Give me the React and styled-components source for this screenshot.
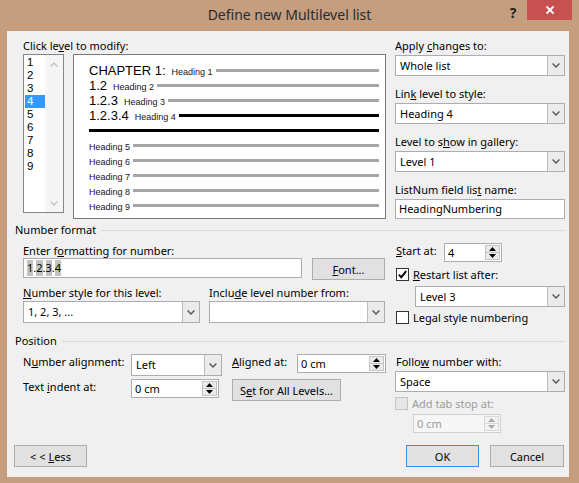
import React from "react";
import styled, { createGlobalStyle } from "styled-components";

const UI = `"Noto Sans", "Open Sans", "DejaVu Sans", sans-serif`;
const ARIAL = `"Liberation Sans", Arial, sans-serif`;

const levels = [1, 2, 3, 4, 5, 6, 7, 8, 9];

const previewRows = [
  { num: "CHAPTER 1:", tag: "Heading 1" },
  { num: "1.2", tag: "Heading 2" },
  { num: "1.2.3", tag: "Heading 3" },
  { num: "1.2.3.4", tag: "Heading 4", dark: true },
  { dark: true },
  { tag: "Heading 5" },
  { tag: "Heading 6" },
  { tag: "Heading 7" },
  { tag: "Heading 8" },
  { tag: "Heading 9" },
];

function Chevron({ color = "#555" }) {
  return (
    <svg width="8" height="5" viewBox="0 0 8 5">
      <path d="M0.6 0.6 L4 4 L7.4 0.6" fill="none" stroke={color} strokeWidth="1.4" />
    </svg>
  );
}

function ChevronUp({ color = "#c2c2c2" }) {
  return (
    <svg width="8" height="5" viewBox="0 0 8 5">
      <path d="M0.6 4.4 L4 1 L7.4 4.4" fill="none" stroke={color} strokeWidth="1.4" />
    </svg>
  );
}

function Triangle({ up, color }) {
  return (
    <svg width="7" height="4" viewBox="0 0 7 4">
      <path d={up ? "M0 4 L3.5 0 L7 4 Z" : "M0 0 L3.5 4 L7 0 Z"} fill={color} />
    </svg>
  );
}

function Combo({ width, height = 21, value, mt = 0 }) {
  return (
    <ComboBox $w={width} $h={height} $mt={mt}>
      <ComboValue $h={height}>{value}</ComboValue>
      <DropButton>
        <Chevron />
      </DropButton>
    </ComboBox>
  );
}

function Spin({ width, value, disabled }) {
  const arrow = disabled ? "#a8a8a8" : "#000";
  return (
    <SpinBox $w={width} $disabled={disabled}>
      <SpinValue $disabled={disabled}>{value}</SpinValue>
      <SpinButtons $disabled={disabled}>
        <SpinHalf>
          <Triangle up color={arrow} />
        </SpinHalf>
        <SpinHalf>
          <Triangle color={arrow} />
        </SpinHalf>
      </SpinButtons>
    </SpinBox>
  );
}

function CheckBox({ checked, disabled }) {
  return (
    <Box $disabled={disabled}>
      {checked && (
        <svg width="11" height="11" viewBox="0 0 11 11">
          <path d="M1.8 5.6 L4.3 8.2 L9.2 2.2" fill="none" stroke="#000" strokeWidth="1.9" />
        </svg>
      )}
    </Box>
  );
}

export default function App() {
  return (
    <>
      <GlobalStyle />
      <Window>
        <TitleBar>
          <Title>Define new Multilevel list</Title>
          <Controls>
            <Help>?</Help>
            <Close>
              <svg width="10" height="10" viewBox="0 0 10 10">
                <path d="M1.5 1.5 L8.5 8.5 M8.5 1.5 L1.5 8.5" stroke="#fff" strokeWidth="1.8" />
              </svg>
            </Close>
          </Controls>
        </TitleBar>

        <Client>
          <TopSection>
            <LeftCol>
              <Label>
                Click le<U>v</U>el to modify:
              </Label>
              <PreviewArea>
                <LevelList>
                  <LevelItems>
                    {levels.map((n) => (
                      <LevelItem key={n} $selected={n === 4}>
                        {n}
                      </LevelItem>
                    ))}
                  </LevelItems>
                  <ScrollTrack>
                    <ChevronUp />
                    <Chevron color="#c2c2c2" />
                  </ScrollTrack>
                </LevelList>
                <Preview>
                  {previewRows.map((row, i) => (
                    <PreviewRow key={i}>
                      {row.num && <Num>{row.num}</Num>}
                      {row.tag && <Tag>{row.tag}</Tag>}
                      <Rule $dark={row.dark} />
                    </PreviewRow>
                  ))}
                </Preview>
              </PreviewArea>
            </LeftCol>

            <RightCol>
              <Field>
                <Label>
                  Apply <U>c</U>hanges to:
                </Label>
                <Combo width={170} value="Whole list" mt={1} />
              </Field>
              <Field>
                <Label>
                  Lin<U>k</U> level to style:
                </Label>
                <Combo width={170} value="Heading 4" mt={1} />
              </Field>
              <Field>
                <Label>
                  Level to s<U>h</U>ow in gallery:
                </Label>
                <Combo width={170} value="Level 1" mt={1} />
              </Field>
              <Field>
                <Label>
                  ListNum field lis<U>t</U> name:
                </Label>
                <TextBox $w={170} $mt={1}>
                  HeadingNumbering
                </TextBox>
              </Field>
            </RightCol>
          </TopSection>

          <SectionHeader $mt={3}>
            <HeaderText>Number format</HeaderText>
            <HeaderLine />
          </SectionHeader>

          <Section $mt={5}>
            <Block $w={363}>
              <Label $h={15}>
                Enter f<U>o</U>rmatting for number:
              </Label>
              <Row>
                <TextBox $w={279}>
                  <Mark>1</Mark>.<Mark>2</Mark>.<Mark>3</Mark>.<Mark>4</Mark>
                </TextBox>
                <Button $w={73} $ml={10}>
                  <U>F</U>ont...
                </Button>
              </Row>
              <Row $mt={5}>
                <Label $w={186} $h={15}>
                  <U>N</U>umber style for this level:
                </Label>
                <Label $h={15}>
                  Inclu<U>d</U>e level number from:
                </Label>
              </Row>
              <Row $mt={1}>
                <Combo width={177} height={22} value="1, 2, 3, ..." />
                <Gap $w={9} />
                <Combo width={176} height={22} value="" />
              </Row>
            </Block>

            <Block $w={169} $ml={10}>
              <Row>
                <Label $w={48} $h={15}>
                  <U>S</U>tart at:
                </Label>
                <Spin width={58} value="4" />
              </Row>
              <CheckRow $mt={6}>
                <CheckBox checked />
                <CheckLabel>
                  <U>R</U>estart list after:
                </CheckLabel>
              </CheckRow>
              <Row $mt={5} $ml={19}>
                <Combo width={150} value="Level 3" />
              </Row>
              <CheckRow $mt={4}>
                <CheckBox />
                <CheckLabel>
                  Le<U>g</U>al style numbering
                </CheckLabel>
              </CheckRow>
            </Block>
          </Section>

          <SectionHeader $mt={9}>
            <HeaderText>Position</HeaderText>
            <HeaderLine />
          </SectionHeader>

          <Section $mt={5}>
            <Block $w={363}>
              <Row>
                <Label $w={108}>
                  N<U>u</U>mber alignment:
                </Label>
                <Combo width={91} height={22} value="Left" />
                <Label $w={65} $ml={10}>
                  <U>A</U>ligned at:
                </Label>
                <Spin width={89} value="0 cm" />
              </Row>
              <Row $mt={3}>
                <Label $w={108}>
                  Text <U>i</U>ndent at:
                </Label>
                <Spin width={88} value="0 cm" />
                <Button $w={109} $ml={13}>
                  S<U>e</U>t for All Levels...
                </Button>
              </Row>
            </Block>

            <Block $w={170} $ml={9}>
              <Label $pl={1}>
                Follo<U>w</U> number with:
              </Label>
              <Combo width={170} value="Space" mt={1} />
              <CheckRow $mt={5}>
                <CheckBox disabled />
                <CheckLabel $disabled>Add tab stop at:</CheckLabel>
              </CheckRow>
              <Row $mt={4} $ml={18}>
                <Spin width={88} value="0 cm" disabled />
              </Row>
            </Block>
          </Section>

          <Footer>
            <Button $w={73} $ml={-1}>
              {"< < "}
              <U>L</U>ess
            </Button>
            <Gap $grow />
            <Button $w={73} $default>
              OK
            </Button>
            <Button $w={74} $ml={11}>
              Cancel
            </Button>
          </Footer>
        </Client>
      </Window>
    </>
  );
}

const GlobalStyle = createGlobalStyle`
  html, body {
    margin: 0;
    padding: 0;
    background: #c59e80;
  }
  * {
    box-sizing: border-box;
  }
`;

const Window = styled.div`
  width: 579px;
  height: 483px;
  background: #c59e80;
  display: flex;
  flex-direction: column;
  font-family: ${UI};
  font-size: 11px;
  color: #000;
  overflow: hidden;
`;

const TitleBar = styled.div`
  height: 31px;
  flex-shrink: 0;
  display: grid;
  grid-template-columns: 1fr auto 1fr;
  align-items: start;
`;

const Title = styled.div`
  grid-column: 2;
  font-size: 14px;
  line-height: 30px;
  color: #2b2b2b;
  white-space: nowrap;
`;

const Controls = styled.div`
  grid-column: 3;
  justify-self: end;
  display: flex;
  margin-right: 7px;
`;

const Help = styled.div`
  width: 28px;
  height: 24px;
  display: flex;
  align-items: center;
  justify-content: center;
  font-size: 14px;
  font-weight: 700;
  color: #222;
`;

const Close = styled.div`
  width: 45px;
  height: 20px;
  background: #c75050;
  display: flex;
  align-items: center;
  justify-content: center;
`;

const Client = styled.div`
  flex: 1;
  margin: 0 10px 6px 7px;
  background: #f0f0f0;
  padding: 7px 4px 10px 8px;
  display: flex;
  flex-direction: column;
`;

const U = styled.span`
  text-decoration: underline;
  text-underline-offset: 1px;
`;

const Label = styled.div`
  ${(p) => (p.$w ? `width: ${p.$w}px; flex-shrink: 0;` : "")}
  height: ${(p) => p.$h || 16}px;
  line-height: ${(p) => p.$h || 16}px;
  margin-left: ${(p) => p.$ml || 0}px;
  padding-left: ${(p) => p.$pl || 0}px;
  white-space: nowrap;
`;

const TopSection = styled.div`
  display: flex;
  gap: 9px;
  margin-left: 8px;
`;

const LeftCol = styled.div`
  width: 363px;
`;

const RightCol = styled.div`
  width: 170px;
`;

const Field = styled.div`
  & + & {
    margin-top: 10px;
  }
`;

const PreviewArea = styled.div`
  display: flex;
  gap: 9px;
`;

const LevelList = styled.div`
  width: 41px;
  height: 159px;
  border: 1px solid #82878f;
  background: #fff;
  display: flex;
`;

const LevelItems = styled.div`
  width: 21px;
  padding: 1px 0 0 1px;
`;

const LevelItem = styled.div`
  height: 13px;
  line-height: 13px;
  padding-left: 2px;
  font-family: ${ARIAL};
  font-size: 11.5px;
  background: ${(p) => (p.$selected ? "#3399ff" : "transparent")};
  color: ${(p) => (p.$selected ? "#fff" : "#000")};
`;

const ScrollTrack = styled.div`
  width: 18px;
  background: #f5f5f5;
  display: flex;
  flex-direction: column;
  align-items: center;
  justify-content: space-between;
  padding: 7px 0 6px;
`;

const Preview = styled.div`
  width: 313px;
  height: 165px;
  border: 1px solid #7a7a7a;
  background: #fff;
  padding: 8px 6px 0 15px;
`;

const PreviewRow = styled.div`
  display: flex;
  align-items: center;
  height: 15px;
`;

const Num = styled.span`
  font-family: ${ARIAL};
  font-size: 13px;
  line-height: 15px;
  margin-right: 6px;
  white-space: nowrap;
`;

const Tag = styled.span`
  font-family: ${ARIAL};
  font-size: 9px;
  line-height: 15px;
  padding-top: 3px;
  margin-right: 3px;
  color: #141428;
  white-space: nowrap;
`;

const Rule = styled.div`
  flex: 1;
  height: 3px;
  background: ${(p) => (p.$dark ? "#000" : "#a6a6a6")};
`;

const ComboBox = styled.div`
  display: flex;
  flex-shrink: 0;
  width: ${(p) => p.$w}px;
  height: ${(p) => p.$h}px;
  margin-top: ${(p) => p.$mt}px;
  border: 1px solid #abadb3;
  background: #fff;
`;

const ComboValue = styled.div`
  flex: 1;
  padding-left: 4px;
  line-height: ${(p) => p.$h - 2}px;
  white-space: nowrap;
  overflow: hidden;
`;

const DropButton = styled.div`
  width: 17px;
  background: #ebebeb;
  border-left: 1px solid #bcbcbc;
  display: flex;
  align-items: center;
  justify-content: center;
`;

const TextBox = styled.div`
  width: ${(p) => p.$w}px;
  height: 20px;
  flex-shrink: 0;
  margin-top: ${(p) => p.$mt || 0}px;
  border: 1px solid #abadb3;
  background: #fff;
  padding-left: 3px;
  line-height: 18px;
  white-space: nowrap;
`;

const Mark = styled.span`
  display: inline-block;
  background: #c3c3c3;
  line-height: 16px;
`;

const SpinBox = styled.div`
  display: flex;
  flex-shrink: 0;
  width: ${(p) => p.$w}px;
  height: 19px;
  border: 1px solid ${(p) => (p.$disabled ? "#cfcfcf" : "#abadb3")};
  background: ${(p) => (p.$disabled ? "#f7f7f7" : "#fff")};
`;

const SpinValue = styled.div`
  flex: 1;
  padding-left: 3px;
  line-height: 17px;
  color: ${(p) => (p.$disabled ? "#9a9a9a" : "#000")};
  white-space: nowrap;
`;

const SpinButtons = styled.div`
  width: 15px;
  margin: 1px;
  display: flex;
  flex-direction: column;
  border: 1px solid ${(p) => (p.$disabled ? "#dadada" : "#c4c4c4")};
  background: ${(p) => (p.$disabled ? "#f2f2f2" : "#ebebeb")};

  & > * + * {
    border-top: 1px solid ${(p) => (p.$disabled ? "#dadada" : "#c4c4c4")};
  }
`;

const SpinHalf = styled.div`
  flex: 1;
  display: flex;
  align-items: center;
  justify-content: center;
`;

const SectionHeader = styled.div`
  display: flex;
  align-items: center;
  height: 16px;
  margin-top: ${(p) => p.$mt}px;
`;

const HeaderText = styled.span`
  line-height: 16px;
  white-space: nowrap;
`;

const HeaderLine = styled.div`
  flex: 1;
  height: 1px;
  margin-left: 5px;
  background: #d9d9d9;
`;

const Section = styled.div`
  display: flex;
  align-items: flex-start;
  margin-left: 8px;
  margin-top: ${(p) => p.$mt}px;
`;

const Block = styled.div`
  width: ${(p) => p.$w}px;
  margin-left: ${(p) => p.$ml || 0}px;
  flex-shrink: 0;
`;

const Row = styled.div`
  display: flex;
  align-items: flex-start;
  margin-top: ${(p) => p.$mt || 0}px;
  margin-left: ${(p) => p.$ml || 0}px;
`;

const Gap = styled.div`
  ${(p) => (p.$grow ? "flex: 1;" : `width: ${p.$w}px; flex-shrink: 0;`)}
`;

const CheckRow = styled.div`
  display: flex;
  align-items: center;
  height: 13px;
  margin-top: ${(p) => p.$mt || 0}px;
`;

const Box = styled.div`
  width: 13px;
  height: 13px;
  flex-shrink: 0;
  border: 1px solid ${(p) => (p.$disabled ? "#c4c4c4" : "#333")};
  background: ${(p) => (p.$disabled ? "#e6e6e6" : "#fff")};
  display: flex;
  align-items: center;
  justify-content: center;
`;

const CheckLabel = styled.span`
  margin-left: 4px;
  line-height: 13px;
  white-space: nowrap;
  color: ${(p) => (p.$disabled ? "#9d9d9d" : "#000")};
`;

const Button = styled.div`
  width: ${(p) => p.$w}px;
  height: 22px;
  flex-shrink: 0;
  margin-left: ${(p) => p.$ml || 0}px;
  border: 1px solid ${(p) => (p.$default ? "#3c8ee6" : "#adadad")};
  background: #e1e1e1;
  display: flex;
  align-items: center;
  justify-content: center;
  white-space: pre;
`;

const Footer = styled.div`
  display: flex;
  align-items: center;
  margin-top: auto;
  padding-right: 1px;
`;
